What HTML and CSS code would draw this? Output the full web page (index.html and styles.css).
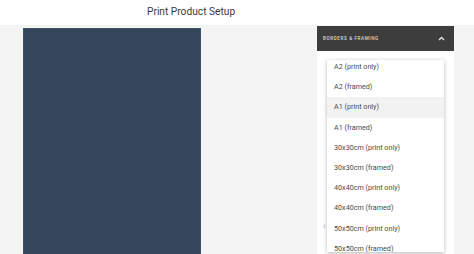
FILE: index.html
```html
<!DOCTYPE html>
<html>
<head>
<meta charset="utf-8">
<link rel="stylesheet" href="styles.css">
</head>
<body>
<header class="top">
  <h1 class="title">Print Product Setup</h1>
</header>
<main class="main">
  <div class="canvas"></div>
  <aside class="panel">
    <div class="panel-head">
      <span class="panel-title">BORDERS &amp; FRAMING</span>
      <svg class="chev" width="7" height="5" viewBox="0 0 7 5"><path d="M1 4 L3.5 1.5 L6 4" fill="none" stroke="#e8e8e8" stroke-width="1.3"/></svg>
    </div>
    <div class="panel-body">
      <span class="hidden-arrow">‹</span>
    </div>
    <div class="dropdown">
      <ul class="options">
        <li>A2 (print only)</li>
        <li>A2 (framed)</li>
        <li class="active">A1 (print only)</li>
        <li>A1 (framed)</li>
        <li>30x30cm (print only)</li>
        <li>30x30cm (framed)</li>
        <li>40x40cm (print only)</li>
        <li>40x40cm (framed)</li>
        <li>50x50cm (print only)</li>
        <li>50x50cm (framed)</li>
      </ul>
    </div>
  </aside>
</main>
</body>
</html>
```
FILE: styles.css
```css
html, body {
  margin: 0;
  padding: 0;
  width: 474px;
  height: 254px;
  overflow: hidden;
  background: #f4f4f4;
  font-family: Roboto, "Liberation Sans", sans-serif;
}
.top {
  height: 25px;
  background: #ffffff;
  display: flex;
  align-items: center;
  padding-left: 147px;
}
.title {
  margin: 0;
  font-size: 10.2px;
  font-weight: 400;
  color: #3a3a3a;
  line-height: 1;
  position: relative;
  top: 0;
}
.main {
  display: flex;
  align-items: flex-start;
  height: 229px;
  background: #f4f4f4;
}
.canvas {
  margin-left: 24px;
  margin-top: 4px;
  width: 176px;
  height: 225px;
  background: #34475a;
  box-shadow: 0 0 0 1px #3d5266;
}
.panel {
  position: relative;
  margin-left: 117px;
  margin-top: 1px;
  width: 137px;
  height: 228px;
  background: #ffffff;
}
.panel-head {
  height: 25px;
  background: #3d3d3d;
  display: flex;
  align-items: center;
  justify-content: space-between;
  padding: 0 9px 0 6px;
}
.panel-title {
  font-size: 4.6px;
  letter-spacing: 0.6px;
  color: #d8d8d8;
  font-weight: 500;
}
.chev {
  display: block;
}
.panel-body {
  position: relative;
  height: 203px;
}
.hidden-arrow {
  position: absolute;
  left: 6px;
  top: 170px;
  font-size: 9px;
  color: #aaa;
}
.dropdown {
  position: absolute;
  left: 10px;
  top: 34px;
  width: 117px;
  height: 192px;
  background: #ffffff;
  overflow: hidden;
  box-shadow: 0 1px 4px rgba(0,0,0,0.3);
}
.options {
  list-style: none;
  margin: -3px 0 0 0;
  padding: 0;
}
.options li {
  height: 20.2px;
  line-height: 20.2px;
  padding-left: 7px;
  font-size: 7.2px;
  color: #4a4a4a;
}
.options li.active {
  background: #f2f2f2;
}
```
